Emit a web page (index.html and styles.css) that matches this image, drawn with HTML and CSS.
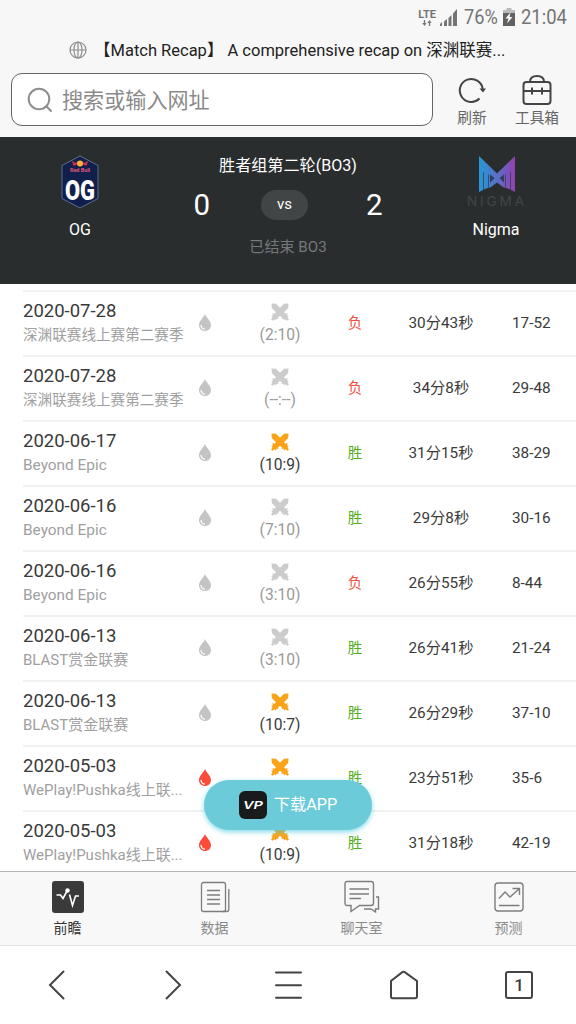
FILE: index.html
```html
<!DOCTYPE html>
<html lang="zh-CN">
<head>
    <meta charset="UTF-8">
    <meta name="viewport" content="width=device-width, initial-scale=1.0">
    <title>OG vs Nigma</title>
    <link rel="stylesheet" href="styles.css">
</head>
<body>
    <!-- shared icons -->
    <svg class="symbols">
        <symbol id="drop" viewBox="0 0 12 17">
            <path fill="currentColor" d="M6 0C7 3.300 12 6.800 12 11.200C12 14.500 9.300 17 6 17S0 14.500 0 11.200C0 6.800 5 3.300 6 0Z"/>
            <path fill="none" stroke="#fff" stroke-width="1.200" stroke-linecap="round" d="M2 11.300C2.200 13.400 3.500 14.800 5.500 15.200"/>
        </symbol>
        <symbol id="swords" viewBox="0 0 18 18">
            <path fill="currentColor" d="M0.500 0.500L5 0.800L9 4.800L13 0.800L17.500 0.500L17.200 5L13 9.200L14.500 10.700L16.500 10L16.200 12.500L17.800 13L16.500 14.500L18 16.500L16.500 17.800L14.500 16.300L13.200 17.500L12.500 15.800L10.500 16L11 14.500L9 12.800L7 14.500L7.500 16L5.500 15.800L4.800 17.500L3.500 16.300L1.500 17.800L0 16.500L1.500 14.500L0.200 13L1.800 12.500L1.500 10L3.500 10.700L5 9.200L0.800 5Z"/>
        </symbol>
    </svg>

    <header class="browser">
        <div class="status">
            <div class="lte">
                <span>LTE</span>
                <svg width="10" height="6" viewBox="0 0 10 6"><path d="M2.500 0V4M7.500 2V6" stroke="#777" stroke-width="1.300"/><path d="M0.300 3L2.500 6L4.700 3ZM5.300 3L7.500 0L9.700 3Z" fill="#777"/></svg>
            </div>
            <svg class="signal" width="18" height="17" viewBox="0 0 18 17"><path d="M0 17V15L2 13V17ZM4 17V12.500L7 10V17ZM8.500 17V9L11.500 6V17ZM13 17V4.500L17 0V17Z" fill="#747474"/></svg>
            <span class="percent">76%</span>
            <svg class="battery" width="12" height="18" viewBox="0 0 12 18"><path d="M3.500 0H8.500V2H12V18H0V2H3.500Z" fill="#bbb"/><path d="M0 5H12V18H0Z" fill="#626262"/><path d="M7.500 4.500L2.500 10.500H5.500L4 15.500L9.500 9H6.500Z" fill="#fff"/></svg>
            <span class="clock">21:04</span>
        </div>
        <div class="page-title">
            <svg width="18" height="18" viewBox="0 0 18 18" fill="none" stroke="#8c8c8c" stroke-width="1.200"><circle cx="9" cy="9" r="8"/><ellipse cx="9" cy="9" rx="4" ry="8"/><path d="M9 1V17M1 9H17"/></svg>
            <span>【Match Recap】 A comprehensive recap on 深渊联赛...</span>
        </div>
        <div class="tools">
            <div class="search">
                <svg width="26" height="26" viewBox="0 0 26 26" fill="none" stroke="#8e8e8e" stroke-width="2"><circle cx="12" cy="12" r="10.300"/><path d="M19.300 19.300L24 24" stroke-linecap="round"/></svg>
                <span>搜索或输入网址</span>
            </div>
            <div class="tool refresh">
                <svg width="28" height="30" viewBox="0 0 28 30" fill="none" stroke="#444" stroke-width="2"><path d="M21.500 23.500A11.500 11.500 0 1 1 24.700 14"/><path d="M21.500 13.500L25 17.500L28 13.500Z" fill="#444" stroke="none"/></svg>
                <span>刷新</span>
            </div>
            <div class="tool toolbox">
                <svg width="30" height="30" viewBox="0 0 30 30" fill="none" stroke="#444" stroke-width="2"><rect x="1.500" y="7" width="27" height="22" rx="3"/><path d="M8 7C8 3.500 10.500 1 15 1S22 3.500 22 7M1.500 16H28.500M10 12.500V19.500M20 12.500V19.500"/></svg>
                <span>工具箱</span>
            </div>
        </div>
    </header>

    <section class="match">
        <div class="team">
            <svg width="38" height="54" viewBox="0 0 38 54">
                <path d="M19 1L37 10.500V43.500L19 53L1 43.500V10.500Z" fill="#10204a" stroke="#596d94"/>
                <path d="M11 6L15 8L17 6H21L23 8L27 6L25.500 11L22 9.500H16L12.500 11Z" fill="#d12f57"/>
                <circle cx="19" cy="8.500" r="3" fill="#f3b53a"/>
                <text x="19" y="16.500" textLength="20" lengthAdjust="spacingAndGlyphs" class="logo-brand">Red Bull</text>
                <text x="19" y="44.500" textLength="30" lengthAdjust="spacingAndGlyphs" class="logo-og">OG</text>
            </svg>
            <span>OG</span>
        </div>
        <div class="result">
            <div class="round">胜者组第二轮(BO3)</div>
            <div class="score"><b>0</b><span class="vs">vs</span><b>2</b></div>
            <div class="state">已结束 BO3</div>
        </div>
        <div class="team">
            <svg width="62" height="54" viewBox="0 0 62 54">
                <defs><linearGradient id="nigma"><stop offset="0" stop-color="#2398d5"/><stop offset="0.500" stop-color="#5970c8"/><stop offset="1" stop-color="#9240ae"/></linearGradient></defs>
                <path d="M14 1L32 18.500L50 1V37L44 34L38 32L32 27.500L26 32L20 34L14 37Z" fill="url(#nigma)"/>
                <path d="M18.500 35V17M45.500 35V17M23.500 32.500V19.500M40.500 32.500V19.500" stroke="#2a2d2e" stroke-width="1" stroke-opacity="0.600"/>
                <path d="M25 19.500L29.500 23L25 27.500ZM39 19.500L34.500 23L39 27.500Z" fill="#303b60"/>
                <text x="2" y="51" textLength="57" class="logo-nigma">NIGMA</text>
            </svg>
            <span>Nigma</span>
        </div>
    </section>

    <main class="list">
        <div class="row">
            <div class="info"><p class="date">2020-07-28</p><p class="event">深渊联赛线上赛第二赛季</p></div>
            <svg class="drop"><use href="#drop"/></svg>
            <div class="kills"><svg><use href="#swords"/></svg>(2:10)</div>
            <span class="lose">负</span><span class="time">30分43秒</span><span>17-52</span>
        </div>
        <div class="row">
            <div class="info"><p class="date">2020-07-28</p><p class="event">深渊联赛线上赛第二赛季</p></div>
            <svg class="drop"><use href="#drop"/></svg>
            <div class="kills"><svg><use href="#swords"/></svg>(--:--)</div>
            <span class="lose">负</span><span class="time">34分8秒</span><span>29-48</span>
        </div>
        <div class="row">
            <div class="info"><p class="date">2020-06-17</p><p class="event latin">Beyond Epic</p></div>
            <svg class="drop"><use href="#drop"/></svg>
            <div class="kills first"><svg><use href="#swords"/></svg>(10:9)</div>
            <span class="win">胜</span><span class="time">31分15秒</span><span>38-29</span>
        </div>
        <div class="row">
            <div class="info"><p class="date">2020-06-16</p><p class="event latin">Beyond Epic</p></div>
            <svg class="drop"><use href="#drop"/></svg>
            <div class="kills"><svg><use href="#swords"/></svg>(7:10)</div>
            <span class="win">胜</span><span class="time">29分8秒</span><span>30-16</span>
        </div>
        <div class="row">
            <div class="info"><p class="date">2020-06-16</p><p class="event latin">Beyond Epic</p></div>
            <svg class="drop"><use href="#drop"/></svg>
            <div class="kills"><svg><use href="#swords"/></svg>(3:10)</div>
            <span class="lose">负</span><span class="time">26分55秒</span><span>8-44</span>
        </div>
        <div class="row">
            <div class="info"><p class="date">2020-06-13</p><p class="event mixed">BLAST赏金联赛</p></div>
            <svg class="drop"><use href="#drop"/></svg>
            <div class="kills"><svg><use href="#swords"/></svg>(3:10)</div>
            <span class="win">胜</span><span class="time">26分41秒</span><span>21-24</span>
        </div>
        <div class="row">
            <div class="info"><p class="date">2020-06-13</p><p class="event mixed">BLAST赏金联赛</p></div>
            <svg class="drop"><use href="#drop"/></svg>
            <div class="kills first"><svg><use href="#swords"/></svg>(10:7)</div>
            <span class="win">胜</span><span class="time">26分29秒</span><span>37-10</span>
        </div>
        <div class="row">
            <div class="info"><p class="date">2020-05-03</p><p class="event mixed">WePlay!Pushka线上联...</p></div>
            <svg class="drop blood"><use href="#drop"/></svg>
            <div class="kills first"><svg><use href="#swords"/></svg></div>
            <span class="win">胜</span><span class="time">23分51秒</span><span>35-6</span>
        </div>
        <div class="row">
            <div class="info"><p class="date">2020-05-03</p><p class="event mixed">WePlay!Pushka线上联...</p></div>
            <svg class="drop blood"><use href="#drop"/></svg>
            <div class="kills first"><svg><use href="#swords"/></svg>(10:9)</div>
            <span class="win">胜</span><span class="time">31分18秒</span><span>42-19</span>
        </div>
        <div class="download">
            <svg width="28" height="28" viewBox="0 0 28 28"><rect width="28" height="28" rx="6" fill="#181a1b"/><text x="14" y="18" textLength="20" lengthAdjust="spacingAndGlyphs" class="logo-vp">VP</text></svg>
            <span>下载APP</span>
        </div>
    </main>

    <nav class="tabs">
        <div class="tab active">
            <svg width="34" height="34" viewBox="0 0 34 34"><rect x="1" y="1" width="32" height="32" rx="3" fill="#3a3a3a"/><path d="M5.500 15H9.500L12 18.500L16 11M18.500 14.500L21.500 25.500L24.500 16H28" fill="none" stroke="#fff" stroke-width="1.600"/><circle cx="16.500" cy="10.500" r="2.200" fill="#fff"/></svg>
            <span>前瞻</span>
        </div>
        <div class="tab">
            <svg width="34" height="34" viewBox="0 0 34 34" fill="none" stroke="#7d7d7d" stroke-width="1.300"><rect x="3.500" y="2.500" width="24" height="29" rx="2"/><path d="M9 10.500H22M9 15H22M9 19.500H22M9 24H22M30.800 9V29.500Q30.800 31.500 28.800 31.500H25"/></svg>
            <span>数据</span>
        </div>
        <div class="tab">
            <svg width="36" height="34" viewBox="0 0 36 34" fill="none" stroke="#7d7d7d" stroke-width="1.400"><path d="M3 1.500H27Q29.500 1.500 29.500 4V23Q29.500 25.500 27 25.500H15.500L7 31.500V25.500H3Q1 25.500 1 23V4Q1 1.500 3 1.500ZM5.500 9H25M5.500 14H25M5.500 18.500H17M32 17H34.500V29H31.500V32L27 29H20"/></svg>
            <span>聊天室</span>
        </div>
        <div class="tab">
            <svg width="34" height="34" viewBox="0 0 34 34" fill="none" stroke="#7d7d7d" stroke-width="1.400"><rect x="3" y="3" width="28" height="28" rx="3"/><path d="M7 18.500L13 12L18 17L27 9M20.500 8.500H27.500V15M7 25.500H27.500"/></svg>
            <span>预测</span>
        </div>
    </nav>

    <footer class="nav">
        <svg width="30" height="30" viewBox="0 0 30 30"><path d="M20.500 1.500L7 15L20.500 28.500"/></svg>
        <svg width="30" height="30" viewBox="0 0 30 30"><path d="M8.500 1.500L22 15L8.500 28.500"/></svg>
        <svg width="30" height="30" viewBox="0 0 30 30"><path d="M2 2.500H27M2 15.200H27M2 27.800H27"/></svg>
        <svg width="30" height="30" viewBox="0 0 30 30"><path d="M12.300 2.200Q13.500 1.500 14.700 2.200L27 11V26Q27 28.200 25 28.200H2.500Q1 28.200 1 26V11Z"/></svg>
        <div class="pages"><span>1</span></div>
    </footer>
</body>
</html>
```
FILE: styles.css
```css
* {
    box-sizing: border-box;
}
body {
    display: flex;
    flex-direction: column;
    width: 576px;
    height: 1024px;
    margin: 0;
    overflow: hidden;
    background-color: #fff;
    color: #3a3a3a;
    font-family: Roboto, "Noto Sans CJK SC", sans-serif;
}
p {
    margin: 0;
}
svg {
    display: block;
    flex-shrink: 0;
}
.symbols {
    display: none;
}

/* browser top */
.browser {
    height: 137px;
    flex-shrink: 0;
    background-color: #f7f7f7;
}
.status {
    display: flex;
    align-items: center;
    justify-content: flex-end;
    height: 34px;
    padding-right: 10px;
    color: #747474;
    font-size: 20px;
    line-height: 34px;
}
.lte {
    display: flex;
    flex-direction: column;
    align-items: center;
    margin-right: 4px;
    font-size: 11px;
    font-weight: bold;
    line-height: 11px;
}
.signal {
    margin-right: 6px;
}
.percent {
    width: 34px;
    transform: scaleX(0.91);
    transform-origin: left;
}
.battery {
    margin: 0 6px 0 5px;
}
.clock {
    width: 45px;
    transform: scaleX(0.92);
    transform-origin: left;
}
.page-title {
    display: flex;
    align-items: center;
    height: 32px;
    padding-left: 69px;
    color: #222;
    font-size: 16.5px;
    line-height: 20px;
    white-space: nowrap;
}
.page-title span {
    margin: 2px 0 0 7px;
}
.tools {
    display: flex;
    padding: 7px 0 0 11px;
}
.search {
    display: flex;
    align-items: center;
    gap: 9px;
    width: 422px;
    height: 53px;
    padding-left: 15px;
    border: 1px solid #666;
    border-radius: 11px;
    background-color: #fff;
    color: #8a8a8a;
    font-size: 21.1px;
}
.search span {
    margin-top: -2px;
}
.tool {
    display: flex;
    flex-direction: column;
    align-items: center;
    gap: 2px;
    padding-top: 2px;
    color: #666;
    font-size: 14.7px;
    line-height: 22px;
}
.refresh {
    width: 78px;
}
.toolbox {
    width: 52px;
}

/* match header */
.match {
    display: flex;
    justify-content: space-between;
    height: 147px;
    flex-shrink: 0;
    background-color: #2a2d2e;
    color: #fff;
}
.team {
    display: flex;
    flex-direction: column;
    align-items: center;
    gap: 10px;
    width: 160px;
    padding-top: 18px;
    font-size: 16px;
    line-height: 22px;
}
.logo-brand {
    fill: #e0567c;
    font-size: 5px;
    font-weight: bold;
    text-anchor: middle;
}
.logo-og {
    fill: #fff;
    font-size: 28px;
    font-weight: 900;
    text-anchor: middle;
}
.logo-nigma {
    fill: #424546;
    font-family: Inter, sans-serif;
    font-size: 13.5px;
}
.logo-vp {
    fill: #fff;
    font-family: Inter, sans-serif;
    font-size: 11px;
    font-style: italic;
    font-weight: 600;
    text-anchor: middle;
}
.result {
    display: flex;
    flex-direction: column;
    align-items: center;
    padding-top: 18px;
    font-size: 16.1px;
    line-height: 22px;
}
.score {
    display: flex;
    align-items: center;
    height: 58px;
    margin-bottom: 1px;
    padding-bottom: 2px;
    font-size: 29.5px;
}
.score b {
    font-weight: normal;
}
.vs {
    width: 47px;
    height: 30px;
    margin: 0 58px 0 51px;
    border-radius: 15px;
    background-color: #414546;
    font-size: 15px;
    line-height: 29px;
    text-align: center;
}
.state {
    color: #75787a;
    font-size: 15.1px;
}

/* history list */
.list {
    position: relative;
    height: 587px;
    padding: 6px 0 0 23px;
    overflow: hidden;
    flex-shrink: 0;
}
.row {
    display: grid;
    grid-template-columns: 160px 44px 106px 44px 135px auto;
    align-items: center;
    height: 65px;
    padding-bottom: 2px;
    border-top: 2px solid #f1f1f1;
    font-size: 15.3px;
    line-height: 20px;
}
.info {
    padding-top: 1px;
}
.date {
    font-size: 18.5px;
    line-height: 24px;
}
.event {
    color: #a0a0a0;
    font-size: 14.6px;
    line-height: 24px;
    white-space: nowrap;
}
.latin {
    font-size: 15.4px;
}
.mixed {
    font-size: 15px;
}
.drop {
    width: 12px;
    height: 17px;
    justify-self: center;
    color: #c4c4c4;
}
.blood {
    color: #fb4c3b;
}
.kills {
    display: flex;
    flex-direction: column;
    align-items: center;
    height: 43px;
    margin-top: 4px;
    color: #999;
    font-size: 15.6px;
    line-height: 24px;
}
.kills svg {
    width: 18px;
    height: 18px;
    margin-bottom: 2px;
    color: #ccc;
}
.first {
    color: #3a3a3a;
}
.first svg {
    color: #fba318;
}
.win,
.lose {
    margin-top: 2px;
    color: #f0503f;
    font-size: 14.5px;
    text-align: center;
}
.win {
    color: #55ad1c;
}
.time {
    margin-top: 1px;
    padding-right: 7px;
    text-align: center;
}
.download {
    position: absolute;
    top: 496px;
    left: 204px;
    display: flex;
    align-items: center;
    justify-content: center;
    gap: 7px;
    width: 168px;
    height: 50px;
    border-radius: 25px;
    background-color: #6bcbd9;
    box-shadow: 0 2px 5px rgba(80, 205, 225, 0.7);
    color: #fff;
    font-size: 16.2px;
}
.download span {
    margin-top: -5px;
}

/* bottom bars */
.tabs {
    display: flex;
    justify-content: center;
    height: 75px;
    flex-shrink: 0;
    padding-top: 8px;
    border-top: 1px solid #b4b4b4;
    border-bottom: 1px solid #e2e2e2;
    background-color: #f8f8f8;
}
.tab {
    display: flex;
    flex-direction: column;
    flex-shrink: 0;
    align-items: center;
    width: 147px;
    color: #8a8a8a;
    font-size: 14px;
    line-height: 29px;
}
.active {
    color: #333;
}
.nav {
    display: flex;
    align-items: center;
    justify-content: space-around;
    flex: 1;
    padding-bottom: 1px;
}
.nav svg {
    fill: none;
    stroke: #444;
    stroke-width: 2;
    stroke-linecap: round;
}
.pages {
    width: 28px;
    height: 28px;
    border: 2px solid #444;
    border-radius: 3px;
    font-size: 17px;
    font-weight: 500;
    line-height: 24px;
    text-align: center;
}
```
